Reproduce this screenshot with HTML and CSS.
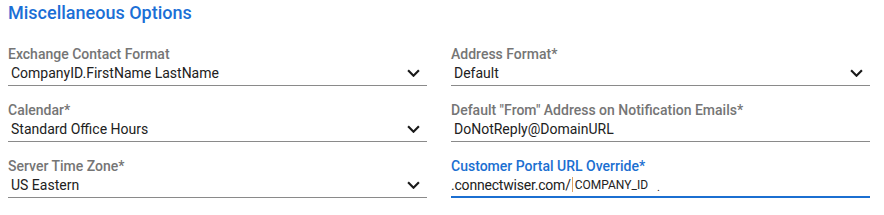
FILE: index.html
```html
<!doctype html>
<html lang="en">
  <head>
    <meta charset="UTF-8" />
    <title>Miscellaneous Options</title>
    <link rel="stylesheet" href="styles.css">
  </head>
  <body>
    <section class="options">
      <h2 class="options-title">Miscellaneous Options</h2>

      <div class="options-grid">
        <div class="field">
          <label class="field-label">Exchange Contact Format</label>
          <div class="field-control">
            <span class="field-value">CompanyID.FirstName LastName</span>
            <svg class="chevron" viewBox="0 0 12 7"><path d="M1 1l5 5 5-5" /></svg>
          </div>
        </div>

        <div class="field">
          <label class="field-label">Address Format*</label>
          <div class="field-control">
            <span class="field-value">Default</span>
            <svg class="chevron" viewBox="0 0 12 7"><path d="M1 1l5 5 5-5" /></svg>
          </div>
        </div>

        <div class="field">
          <label class="field-label">Calendar*</label>
          <div class="field-control">
            <span class="field-value">Standard Office Hours</span>
            <svg class="chevron" viewBox="0 0 12 7"><path d="M1 1l5 5 5-5" /></svg>
          </div>
        </div>

        <div class="field">
          <label class="field-label">Default "From" Address on Notification Emails*</label>
          <div class="field-control">
            <span class="field-value">DoNotReply@DomainURL</span>
          </div>
        </div>

        <div class="field">
          <label class="field-label">Server Time Zone*</label>
          <div class="field-control">
            <span class="field-value">US Eastern</span>
            <svg class="chevron" viewBox="0 0 12 7"><path d="M1 1l5 5 5-5" /></svg>
          </div>
        </div>

        <div class="field is-focused">
          <label class="field-label">Customer Portal URL Override*</label>
          <div class="field-control">
            <span class="field-value url-value">.connectwiser.com/<span class="caret"></span><span class="placeholder">COMPANY_ID</span><span class="dot">.</span></span>
          </div>
        </div>
      </div>
    </section>
  </body>
</html>
```

FILE: styles.css
```css
* {
  margin: 0;
  padding: 0;
  box-sizing: border-box;
}

body {
  font-family: Roboto, "Liberation Sans", sans-serif;
  background: #ffffff;
  padding: 3px 8px 0;
}

.options-title {
  font-size: 18px;
  line-height: 20px;
  font-weight: 500;
  color: #1b6fd6;
  margin-bottom: 23px;
}

.options-grid {
  width: 862px;
  display: grid;
  grid-template-columns: 419px 419px;
  column-gap: 24px;
  row-gap: 16px;
}

.field-label {
  display: block;
  font-size: 14px;
  line-height: 16px;
  font-weight: 500;
  color: #757575;
}

.field-control {
  display: flex;
  align-items: center;
  justify-content: space-between;
  height: 24px;
  padding: 0 7px 1px 3px;
  border-bottom: 1px solid #8a8a8a;
}

.field-value {
  font-size: 14px;
  line-height: 22px;
  color: #212121;
  white-space: nowrap;
}

.chevron {
  width: 13px;
  height: 8px;
  fill: none;
  stroke: #1a1a1a;
  stroke-width: 2;
}

/* focused field */
.is-focused .field-label {
  color: #1b6fd1;
}

.is-focused .field-control {
  padding-left: 0;
  border-bottom: 2px solid #1b6fd1;
}

.url-value {
  display: flex;
  align-items: center;
  letter-spacing: -0.2px;
}

.caret {
  width: 1px;
  height: 15px;
  background: #e0a060;
  margin: 0 2px 0 1px;
}

.placeholder {
  font-size: 12px;
  letter-spacing: 0;
  color: #222;
}

.dot {
  font-size: 11px;
  margin-left: 9px;
  align-self: flex-end;
  line-height: 16px;
}
```
